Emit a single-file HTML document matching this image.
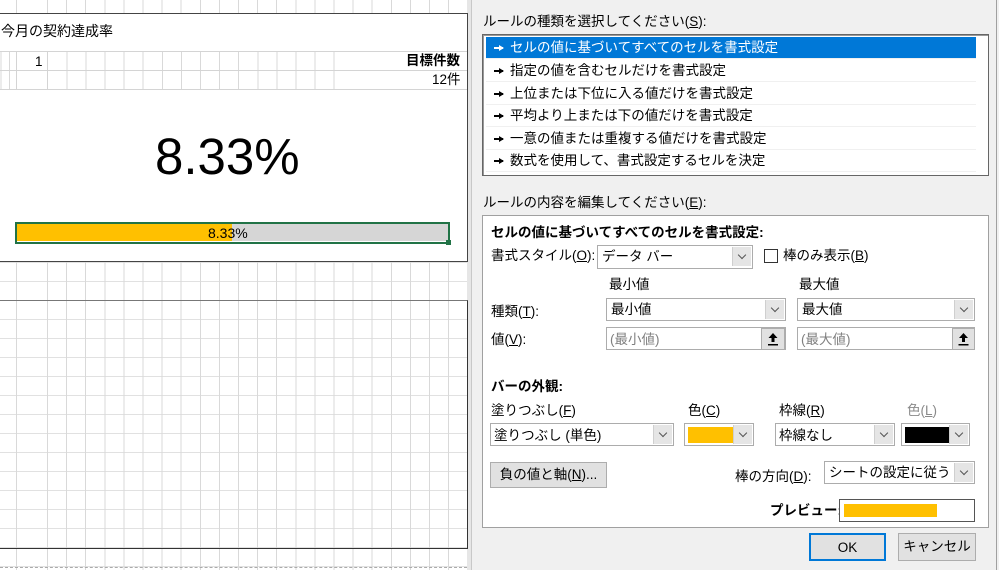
<!DOCTYPE html>
<html><head><meta charset="utf-8"><style>
*{margin:0;padding:0;box-sizing:border-box}
body{width:999px;height:570px;overflow:hidden;position:relative;background:#fff;font-family:"Liberation Sans","Noto Sans CJK JP",sans-serif;font-size:13px;color:#000}
.a{position:absolute}
.grid{background-image:repeating-linear-gradient(90deg,#d9d9d9 0 1px,transparent 1px 19.1px),repeating-linear-gradient(180deg,#e1e1e1 0 1px,transparent 1px 19px)}
.dlg{left:471px;top:0;width:528px;height:570px;background:#f0f0f0;border-left:1px solid #c8c8c8}
.t{position:absolute;white-space:nowrap;font-size:13.5px;line-height:16px}
.sel{position:absolute;background:#fff;border:1px solid #acacac;height:23px}
.sel .ar{position:absolute;right:1px;top:1px;width:19px;height:19px;background:#e5e5e5;border-left:1px solid #cfcfcf}
.sel .ar:after{content:"";position:absolute;left:6px;top:5px;width:5px;height:5px;border-right:1px solid #555;border-bottom:1px solid #555;transform:rotate(45deg)}
.btn{position:absolute;background:#e1e1e1;border:1px solid #adadad;text-align:center;font-size:13.5px}
.li{position:absolute;left:3px;width:490px;height:22px;line-height:22px;padding-left:24px;border-bottom:1px solid #f0f0f0;font-size:13.5px}
.li:before{content:"";position:absolute;left:8px;top:10px;width:9px;height:2px;background:#000}
.li:after{content:"";position:absolute;left:13px;top:8px;border-left:5px solid #000;border-top:3px solid transparent;border-bottom:3px solid transparent}
.li.s{background:#0078d7;color:#fff}
.li.s:before{background:#fff}.li.s:after{border-left-color:#fff}
u{text-decoration:underline}
</style></head><body>
<!-- spreadsheet -->
<div class="a grid" style="left:47px;top:-4px;width:421px;height:574px"></div>
<div class="a" style="left:0;top:-4px;width:47px;height:574px;background-image:repeating-linear-gradient(180deg,#e1e1e1 0 1px,transparent 1px 19px)"></div>
<div class="a" style="left:16px;top:0;width:1px;height:570px;background:#d9d9d9"></div>
<div class="a" style="left:467px;top:0;width:5px;height:570px;background:#e6e6e6"></div>
<!-- top box -->
<div class="a" style="left:0;top:13px;width:468px;height:249px;background:#fff;border:1px solid #444;border-left:none"></div>
<div class="a" style="left:0;top:51px;width:467px;height:39px;background-image:repeating-linear-gradient(90deg,#d9d9d9 0 1px,transparent 1px 19.1px);background-position:9px 0"></div>
<div class="a" style="left:0;top:51px;width:467px;height:1px;background:#d4d4d4"></div>
<div class="a" style="left:0;top:70px;width:467px;height:1px;background:#d4d4d4"></div>
<div class="a" style="left:0;top:89px;width:467px;height:1px;background:#d4d4d4"></div>
<div class="a" style="left:17px;top:52px;width:29px;height:18px;background:#fff"></div>
<div class="a" style="left:17px;top:71px;width:29px;height:18px;background:#fff"></div>
<div class="a" style="left:16px;top:52px;width:1px;height:37px;background:#d4d4d4"></div>
<div class="a" style="left:47px;top:52px;width:1px;height:37px;background:#d4d4d4"></div>
<div class="a" style="left:353px;top:52px;width:113px;height:18px;background:#fff"></div>
<div class="a" style="left:353px;top:71px;width:113px;height:18px;background:#fff"></div>
<div class="t" style="left:1px;top:23px;font-size:14px">今月の契約達成率</div>
<div class="t" style="left:35px;top:54px">1</div>
<div class="t" style="left:406px;top:53px;font-weight:bold">目標件数</div>
<div class="t" style="left:432px;top:72px">12件</div>
<div class="t" style="left:155px;top:128px;font-size:51px;line-height:58px">8.33%</div>
<div class="a" style="left:15px;top:222px;width:435px;height:22px;border:2px solid #217346;background:#fff"></div>
<div class="a" style="left:17px;top:224px;width:431px;height:17px;background:#d6d6d6"></div>
<div class="a" style="left:17px;top:224px;width:215px;height:17px;background:#ffc000"></div>
<div class="t" style="left:208px;top:225px;font-size:14px">8.33%</div>
<div class="a" style="left:446px;top:240px;width:5px;height:5px;background:#217346"></div>
<!-- second box -->
<div class="a" style="left:0;top:300px;width:468px;height:249px;border:1px solid #333;border-left:none;border-top-color:#777"></div>
<div class="a" style="left:0;top:567px;width:467px;border-top:1px dashed #aaa"></div>
<!-- dialog -->
<div class="a dlg"></div>
<div class="a" style="left:996px;top:0;width:1px;height:570px;background:#a0a0a0"></div>
<div class="t" style="left:483px;top:14px">ルールの種類を選択してください(<u>S</u>):</div>
<div class="a" style="left:482px;top:34px;width:507px;height:142px;background:#fff;border:1px solid #666;box-shadow:inset 1px 1px 0 #999">
<div class="li s" style="top:2px">セルの値に基づいてすべてのセルを書式設定</div>
<div class="li" style="top:25px">指定の値を含むセルだけを書式設定</div>
<div class="li" style="top:48px">上位または下位に入る値だけを書式設定</div>
<div class="li" style="top:70px">平均より上または下の値だけを書式設定</div>
<div class="li" style="top:93px">一意の値または重複する値だけを書式設定</div>
<div class="li" style="top:115px">数式を使用して、書式設定するセルを決定</div>
</div>
<div class="t" style="left:483px;top:195px">ルールの内容を編集してください(<u>E</u>):</div>
<div class="a" style="left:482px;top:215px;width:507px;height:313px;background:#fff;border:1px solid #a0a0a0"></div>
<div class="t" style="left:491px;top:225px;font-weight:bold">セルの値に基づいてすべてのセルを書式設定:</div>
<div class="t" style="left:491px;top:248px">書式スタイル(<u>O</u>):</div>
<div class="sel" style="left:597px;top:245px;width:156px;height:24px"><div class="t" style="left:4px;top:3px">データ バー</div><div class="ar"></div></div>
<div class="a" style="left:764px;top:249px;width:14px;height:14px;border:1px solid #333;background:#fff"></div>
<div class="t" style="left:783px;top:248px">棒のみ表示(<u>B</u>)</div>
<div class="t" style="left:609px;top:277px">最小値</div>
<div class="t" style="left:799px;top:277px">最大値</div>
<div class="t" style="left:491px;top:304px">種類(<u>T</u>):</div>
<div class="sel" style="left:606px;top:298px;width:180px"><div class="t" style="left:4px;top:3px">最小値</div><div class="ar"></div></div>
<div class="sel" style="left:797px;top:298px;width:178px"><div class="t" style="left:4px;top:3px">最大値</div><div class="ar"></div></div>
<div class="t" style="left:491px;top:332px">値(<u>V</u>):</div>
<div class="sel" style="left:606px;top:327px;width:180px"><div class="t" style="left:3px;top:4px;color:#808080">(最小値)</div></div>
<div class="btn" style="left:761px;top:328px;width:24px;height:22px"><svg width="22" height="20" viewBox="0 0 22 20"><path d="M11 4 L6.5 9 H9.5 V13 H12.5 V9 H15.5 Z M6 15 H16 V16.5 H6 Z" fill="#000"/></svg></div>
<div class="sel" style="left:797px;top:327px;width:178px"><div class="t" style="left:3px;top:4px;color:#808080">(最大値)</div></div>
<div class="btn" style="left:952px;top:328px;width:23px;height:22px"><svg width="21" height="20" viewBox="0 0 21 20"><path d="M10.5 4 L6 9 H9 V13 H12 V9 H15 Z M5.5 15 H15.5 V16.5 H5.5 Z" fill="#000"/></svg></div>
<div class="t" style="left:491px;top:379px;font-weight:bold">バーの外観:</div>
<div class="t" style="left:491px;top:403px">塗りつぶし(<u>F</u>)</div>
<div class="t" style="left:688px;top:403px">色(<u>C</u>)</div>
<div class="t" style="left:779px;top:403px">枠線(<u>R</u>)</div>
<div class="t" style="left:907px;top:403px;color:#8a8a8a">色(<u>L</u>)</div>
<div class="sel" style="left:490px;top:423px;width:184px"><div class="t" style="left:3px;top:4px">塗りつぶし (単色)</div><div class="ar"></div></div>
<div class="sel" style="left:684px;top:423px;width:70px"><div class="a" style="left:3px;top:3px;width:45px;height:16px;background:#ffc000"></div><div class="ar"></div></div>
<div class="sel" style="left:775px;top:423px;width:120px"><div class="t" style="left:3px;top:4px">枠線なし</div><div class="ar"></div></div>
<div class="sel" style="left:901px;top:423px;width:69px"><div class="a" style="left:3px;top:3px;width:46px;height:16px;background:#000"></div><div class="ar"></div></div>
<div class="btn" style="left:490px;top:462px;width:117px;height:26px;line-height:24px">負の値と軸(<u>N</u>)...</div>
<div class="t" style="left:735px;top:469px">棒の方向(<u>D</u>):</div>
<div class="sel" style="left:824px;top:461px;width:151px"><div class="t" style="left:4px;top:3px">シートの設定に従う</div><div class="ar"></div></div>
<div class="t" style="left:770px;top:503px;font-weight:bold">プレビュー:</div>
<div class="a" style="left:839px;top:499px;width:136px;height:23px;border:1px solid #555;background:#fff"><div class="a" style="left:4px;top:4px;width:93px;height:13px;background:#ffc000"></div></div>
<div class="btn" style="left:809px;top:533px;width:77px;height:28px;line-height:25px;border:2px solid #0078d7">OK</div>
<div class="btn" style="left:898px;top:533px;width:78px;height:28px;line-height:26px">キャンセル</div>
</body></html>
